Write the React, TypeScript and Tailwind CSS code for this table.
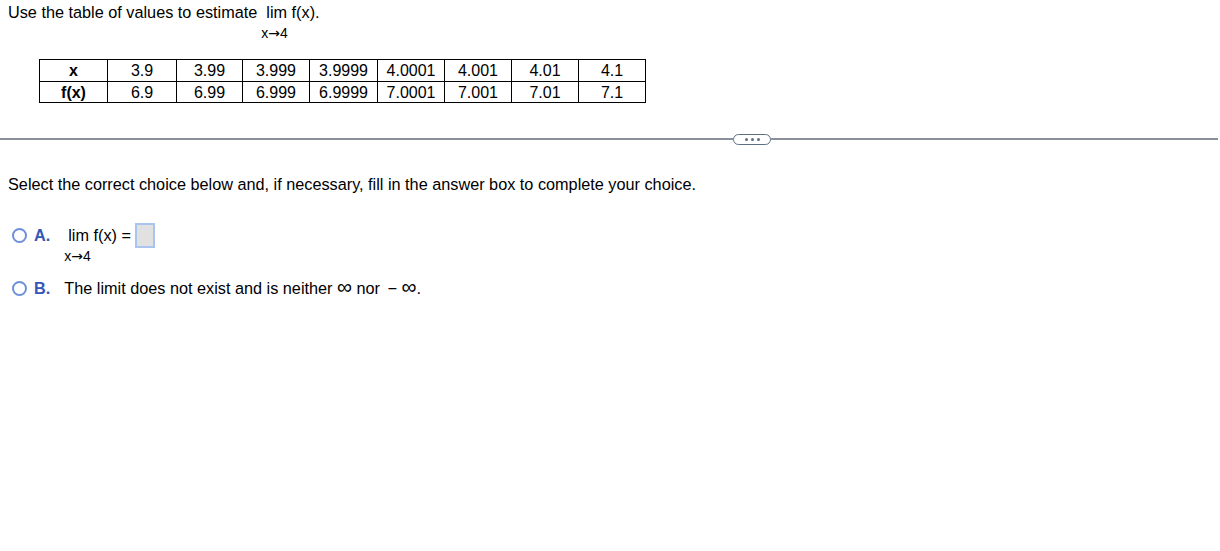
import React from "react";

const xs = ["3.9", "3.99", "3.999", "3.9999", "4.0001", "4.001", "4.01", "4.1"];
const fx = ["6.9", "6.99", "6.999", "6.9999", "7.0001", "7.001", "7.01", "7.1"];
const widths = [69, 66, 67, 68, 67, 67, 67, 67];

const Radio: React.FC = () => (
  <span className="inline-block w-[15px] h-[15px] rounded-full border-[2px] border-[#6f8fd8] bg-white shrink-0" />
);

const Sub: React.FC = () => (
  <span className="text-[14px] leading-[14px] whitespace-nowrap">
    x<span className="font-['DejaVu_Sans',sans-serif] text-[14px]">→</span>4
  </span>
);

const App: React.FC = () => {
  return (
    <div className="w-[1220px] h-[551px] bg-white text-[#000] font-['Liberation_Sans',Arial,sans-serif] text-[16.25px]">
      <div className="pl-[8px] pt-[3px] flex items-start">
        <span className="leading-[18px]">Use the table of values to estimate</span>
        <span className="ml-[9px] flex flex-col">
          <span className="leading-[18px]">lim f(x).</span>
          <span className="-ml-[5px] mt-[5px] flex">
            <Sub />
          </span>
        </span>
      </div>

      <table className="ml-[39px] mt-[19px] border-collapse text-[16px]">
        <tbody>
          <tr>
            <td className="w-[68px] h-[22px] border border-black text-center font-bold leading-[20px] p-0">x</td>
            {xs.map((v, i) => (
              <td key={v} style={{ width: widths[i] }} className="h-[22px] border border-black text-center leading-[20px] p-0">
                {v}
              </td>
            ))}
          </tr>
          <tr>
            <td className="h-[21px] border border-black text-center font-bold leading-[19px] p-0">f(x)</td>
            {fx.map((v) => (
              <td key={v} className="h-[21px] border border-black text-center leading-[19px] p-0">
                {v}
              </td>
            ))}
          </tr>
        </tbody>
      </table>

      <div className="mt-[30px] flex items-center h-[12px]">
        <div className="w-[733px] h-[2px] bg-[#8a9099]" />
        <div className="w-[38px] h-[11px] rounded-[6px] border border-[#5c6f82] flex items-center justify-center gap-[3px]">
          <span className="w-[3px] h-[3px] rounded-full bg-[#5c6f82]" />
          <span className="w-[3px] h-[3px] rounded-full bg-[#5c6f82]" />
          <span className="w-[3px] h-[3px] rounded-full bg-[#5c6f82]" />
        </div>
        <div className="w-[447px] h-[2px] bg-[#8a9099]" />
      </div>

      <div className="pl-[8px] mt-[30px] leading-[18px]">
        Select the correct choice below and, if necessary, fill in the answer box to complete your choice.
      </div>

      <div className="pl-[12px] mt-[30px] flex items-start">
        <div className="flex items-center h-[24px]">
          <Radio />
          <span className="ml-[7px] font-bold text-[#3557b7]">A.</span>
        </div>
        <div className="ml-[14px] flex flex-col">
          <div className="flex items-center h-[24px]">
            <span className="ml-[4px]">lim f(x) =</span>
            <span className="ml-[4px] w-[20px] h-[25px] bg-[#e1e1e1] border-[2px] border-[#a8c4ef]" />
          </div>
          <span className="mt-[2px] flex">
            <Sub />
          </span>
        </div>
      </div>

      <div className="pl-[12px] mt-[15px] flex items-center h-[20px]">
        <Radio />
        <span className="ml-[7px] font-bold text-[#3557b7]">B.</span>
        <span className="ml-[14px]">
          The limit does not exist and is neither <span className="text-[21px] leading-[14px]">∞</span> nor{" "}
          <span className="ml-[3px]">−</span> <span className="text-[21px] leading-[14px]">∞</span>.
        </span>
      </div>
    </div>
  );
};

export default App;
